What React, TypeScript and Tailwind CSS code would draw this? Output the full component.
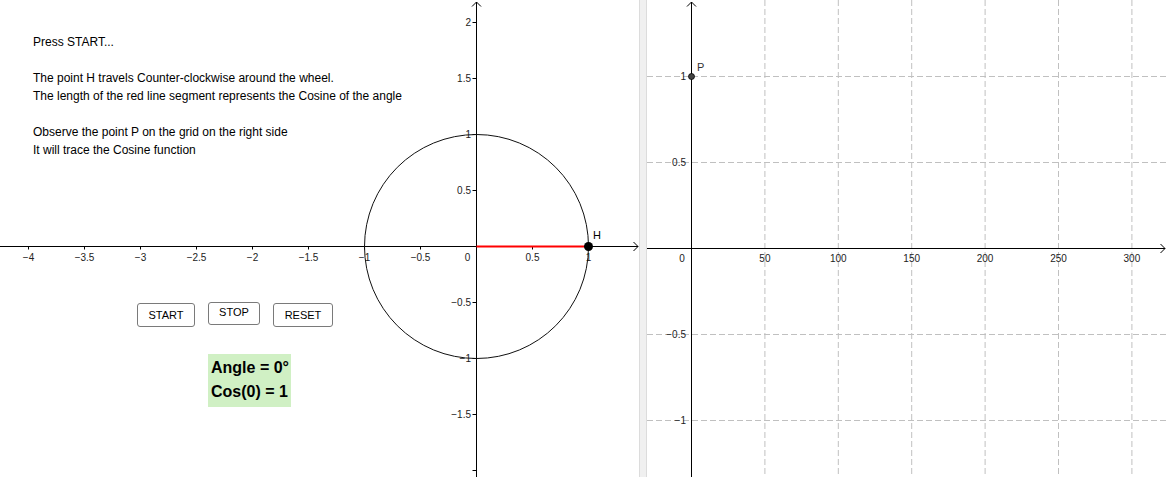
import React from 'react';

const FONT = { fontFamily: '"Liberation Sans", Arial, sans-serif' };

// left view: origin and scale (px per unit)
const LO = { x: 476.5, y: 246.5, s: 112 };
// right view: origin, px per 50 on x, px per 1 on y
const RO = { x: 44.5, y: 248.5, sx: 73.4, sy: 172 };

const fmt = (v: number) => (v < 0 ? '\u2212' + String(-v) : String(v));

const leftXTicks = [-4, -3.5, -3, -2.5, -2, -1.5, -1, -0.5, 0.5, 1];
const leftYTicks = [2, 1.5, 1, 0.5, -0.5, -1, -1.5];
const rightX = [50, 100, 150, 200, 250, 300];
const rightY = [1, 0.5, -0.5, -1];

const lines = [
  'Press START...',
  '',
  'The point H travels Counter-clockwise around the wheel.',
  'The length of the red line segment represents the Cosine of the angle',
  '',
  'Observe the point P on the grid on the right side',
  'It will trace the Cosine function',
];

function LeftGraph() {
  return (
    <svg width={639} height={477} className="absolute left-0 top-0" style={FONT}>
      {/* axes */}
      <line x1={0} y1={LO.y} x2={638} y2={LO.y} stroke="#000" strokeWidth={1} />
      <polyline points="633.5,242 638,246.5 633.5,251" fill="none" stroke="#000" strokeWidth={1} />
      <line x1={LO.x} y1={2} x2={LO.x} y2={477} stroke="#000" strokeWidth={1} />
      <polyline points="472,6.5 476.5,2 481,6.5" fill="none" stroke="#000" strokeWidth={1} />

      {leftXTicks.map(v => {
        const x = LO.x + v * LO.s;
        return (
          <g key={'x' + v}>
            <line x1={x} y1={LO.y} x2={x} y2={LO.y + 3} stroke="#000" />
            <text x={x} y={261} fontSize={10} textAnchor="middle" fill="#222">{fmt(v)}</text>
          </g>
        );
      })}
      <text x={467.5} y={261} fontSize={10} textAnchor="middle" fill="#222">0</text>

      {[...leftYTicks, -2].map(v => {
        const y = LO.y - v * LO.s;
        return (
          <g key={'y' + v}>
            <line x1={LO.x - 4} y1={y} x2={LO.x} y2={y} stroke="#000" />
            {v !== -2 && (
              <text x={471} y={y + 3.5} fontSize={10} textAnchor="end" fill="#222">{fmt(v)}</text>
            )}
          </g>
        );
      })}

      {/* unit circle */}
      <circle cx={LO.x} cy={LO.y} r={LO.s} fill="none" stroke="#111" strokeWidth={1} />
      {/* cosine segment */}
      <line x1={LO.x} y1={LO.y} x2={LO.x + LO.s} y2={LO.y} stroke="#ff0000" strokeWidth={2} />
      <circle cx={LO.x + LO.s} cy={LO.y} r={4.5} fill="#000" />
      <text x={593} y={239} fontSize={11} fill="#000">H</text>
    </svg>
  );
}

function RightGraph() {
  return (
    <svg width={521} height={477} className="absolute left-0 top-0" style={FONT}>
      {rightX.map(v => {
        const x = RO.x + (v / 50) * RO.sx;
        return <line key={'gx' + v} x1={x} y1={0} x2={x} y2={477} stroke="#c0c0c0" strokeDasharray="6 3" />;
      })}
      {rightY.map(v => {
        const y = RO.y - v * RO.sy;
        return <line key={'gy' + v} x1={0} y1={y} x2={521} y2={y} stroke="#c0c0c0" strokeDasharray="6 3" />;
      })}

      <line x1={0} y1={RO.y} x2={518} y2={RO.y} stroke="#000" />
      <polyline points="513.5,244 518,248.5 513.5,253" fill="none" stroke="#000" />
      <line x1={RO.x} y1={2} x2={RO.x} y2={477} stroke="#000" />
      <polyline points="40,6.5 44.5,2 49,6.5" fill="none" stroke="#000" />

      {rightX.map(v => {
        const x = RO.x + (v / 50) * RO.sx;
        return <text key={'lx' + v} x={x} y={262} fontSize={10} textAnchor="middle" fill="#222">{v}</text>;
      })}
      <text x={35} y={262} fontSize={10} textAnchor="middle" fill="#222">0</text>
      {rightY.map(v => {
        const y = RO.y - v * RO.sy;
        return <text key={'ly' + v} x={39} y={y + 3.5} fontSize={10} textAnchor="end" fill="#222">{fmt(v)}</text>;
      })}

      <circle cx={RO.x} cy={RO.y - RO.sy} r={3} fill="#444" stroke="#000" strokeWidth={0.8} />
      <text x={50} y={71} fontSize={11} fill="#333">P</text>
    </svg>
  );
}

function GgbButton({ label, className }: { label: string; className: string }) {
  return (
    <button
      type="button"
      className={`bg-white border border-[#7a7a7a] rounded-[3px] text-[11px] text-black leading-none ${className}`}
      style={FONT}
    >
      {label}
    </button>
  );
}

export default function App() {
  return (
    <div className="w-[1168px] h-[477px] bg-white flex overflow-hidden" style={FONT}>
      <div className="relative w-[639px] h-full shrink-0">
        <LeftGraph />

        {/* text object placed on the canvas */}
        <div className="absolute left-[33px] top-[33px] text-[12px] leading-[18px] text-black">
          {lines.map((t, i) => (
            <p key={i} className="whitespace-nowrap">{t || '\u00a0'}</p>
          ))}
        </div>

        {/* buttons and angle readout placed on the canvas */}
        <div className="absolute left-[137px] top-[302px] flex flex-col items-start gap-[27px]">
          <div className="flex items-start gap-[13px]">
            <GgbButton label="START" className="mt-[1px] w-[58px] h-[24px]" />
            <GgbButton label="STOP" className="w-[52px] h-[23px] pb-[3px]" />
            <GgbButton label="RESET" className="mt-[1px] w-[60px] h-[24px]" />
          </div>
          <div className="ml-[71px] w-[83px] h-[53px] bg-[#d0f0c4] px-[3px] pt-[2px] text-[16px] font-bold leading-[24px] text-black whitespace-nowrap">
            <div>Angle = 0°</div>
            <div>Cos(0) = 1</div>
          </div>
        </div>
      </div>

      <div className="w-[8px] h-full shrink-0 bg-[#f0f0f0] border-x border-[#dcdcdc]" />

      <div className="relative flex-1 h-full">
        <RightGraph />
      </div>
    </div>
  );
}
